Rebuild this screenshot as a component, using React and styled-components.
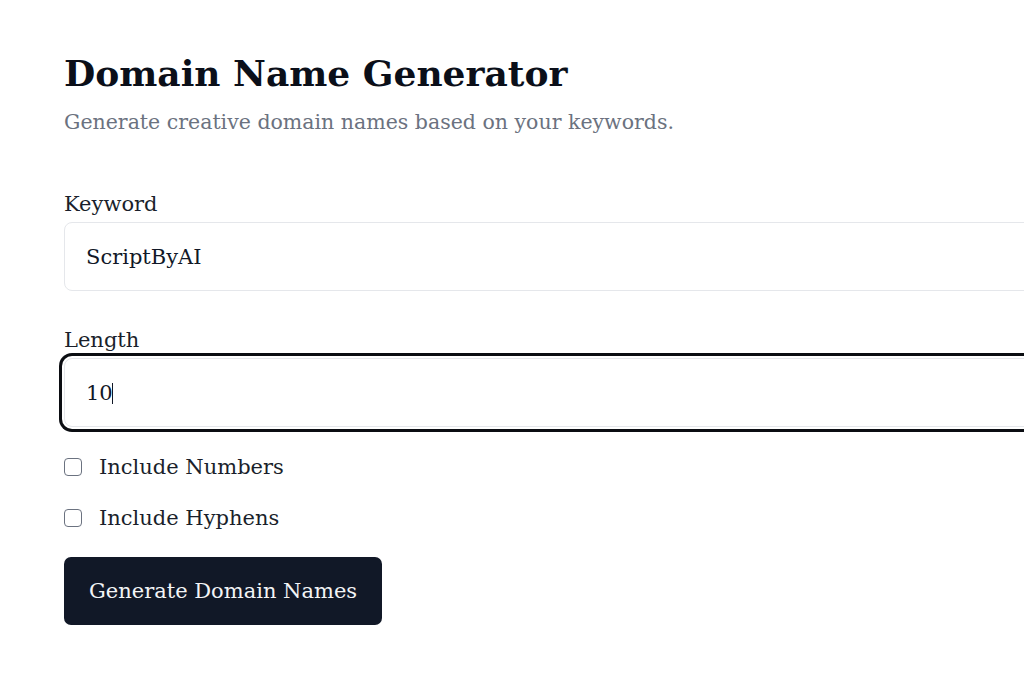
import styled, { createGlobalStyle } from "styled-components";

const GlobalStyle = createGlobalStyle`
    html, body {
        margin: 0;
        padding: 0;
        background: #ffffff;
        overflow: hidden;
    }
    body {
        font-family: "DejaVu Serif", "Liberation Serif", serif;
        color: #111827;
    }
`;

const Page = styled.div`
    padding: 51px 0 0 64px;
    width: 1100px;
    box-sizing: border-box;
`;

const Title = styled.h1`
    margin: 0;
    font-size: 36px;
    line-height: 44px;
    font-weight: 700;
    color: #0b0f19;
`;

const Subtitle = styled.p`
    margin: 13px 0 0;
    font-size: 20.5px;
    line-height: 28px;
    color: #6b7280;
`;

const Form = styled.form`
    margin-top: 52px;
    display: flex;
    flex-direction: column;
`;

const Field = styled.div`
    display: flex;
    flex-direction: column;
    gap: 4px;
    margin-bottom: ${(p) => p.$space || 0}px;
`;

const Label = styled.label`
    padding-top: 2px;
    font-size: 21px;
    line-height: 28px;
    color: #1a1f2b;
`;

const InputWrap = styled.div`
    position: relative;
`;

const Input = styled.input`
    box-sizing: border-box;
    display: block;
    height: 69px;
    width: 100%;
    padding: 0 21px;
    font-family: inherit;
    font-size: 21px;
    color: #111827;
    background: #fff;
    border: 1px solid #e5e7eb;
    border-radius: 8px;
    outline: none;
    box-shadow: ${(p) =>
        p.$focused ? "0 0 0 2px #ffffff, 0 0 0 5px #0b0d12" : "none"};
`;

/* text cursor drawn over the focused field */
const Caret = styled.span`
    position: absolute;
    left: ${(p) => p.$x}px;
    top: 25px;
    width: 1px;
    height: 21px;
    background: #111827;
    pointer-events: none;
`;

const CheckRow = styled.label`
    display: flex;
    align-items: center;
    gap: 17px;
    font-size: 21px;
    line-height: 28px;
    color: #1a1f2b;
    margin-bottom: ${(p) => p.$space || 0}px;
`;

const Box = styled.span`
    width: 18px;
    height: 18px;
    box-sizing: border-box;
    border: 1.5px solid #6b7280;
    border-radius: 4px;
    background: #fff;
    flex-shrink: 0;
`;

const Button = styled.button`
    align-self: flex-start;
    height: 68px;
    padding: 0 25px;
    border: none;
    border-radius: 7px;
    background: #111827;
    color: #f3f4f6;
    font-family: inherit;
    font-size: 21px;
    cursor: pointer;
`;

const App = () => {
    return (
        <>
            <GlobalStyle />
            <Page>
                <Title>Domain Name Generator</Title>
                <Subtitle>Generate creative domain names based on your keywords.</Subtitle>
                <Form onSubmit={(e) => e.preventDefault()}>
                    <Field $space={33}>
                        <Label htmlFor="keyword">Keyword</Label>
                        <Input id="keyword" defaultValue="ScriptByAI" />
                    </Field>
                    <Field $space={26}>
                        <Label htmlFor="length">Length</Label>
                        <InputWrap>
                            <Input id="length" defaultValue="10" $focused />
                            <Caret $x={48} />
                        </InputWrap>
                    </Field>
                    <CheckRow $space={23}>
                        <Box />
                        Include Numbers
                    </CheckRow>
                    <CheckRow $space={25}>
                        <Box />
                        Include Hyphens
                    </CheckRow>
                    <Button type="submit">Generate Domain Names</Button>
                </Form>
            </Page>
        </>
    );
};

export default App;
